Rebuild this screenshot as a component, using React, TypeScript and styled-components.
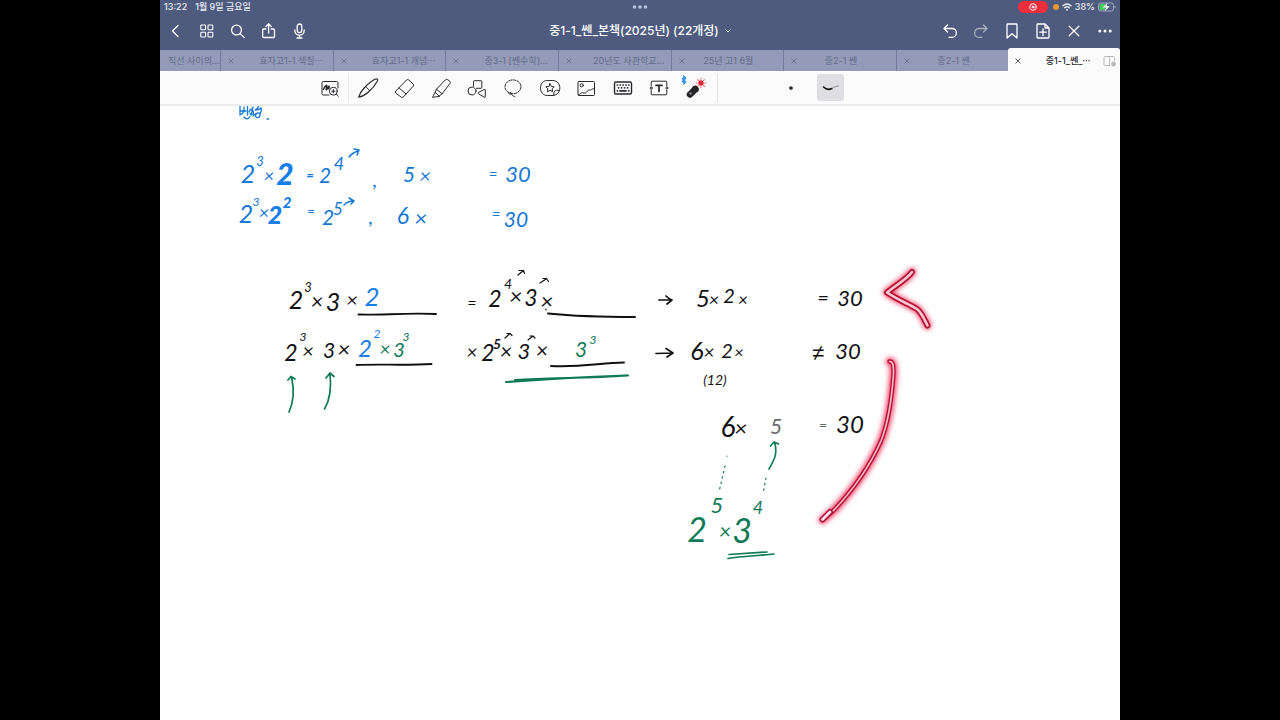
import React from 'react';
import styled, { createGlobalStyle } from 'styled-components';

const GlobalStyle = createGlobalStyle`
  * { box-sizing: border-box; }
  body { margin: 0; background: #000; font-family: Inter, "Noto Sans CJK KR", sans-serif; }
  button { font: inherit; color: inherit; background: none; border: 0; padding: 0; margin: 0; }
  svg { display: block; }
`;

const Screen = styled.div`
  width: 75%;
  min-height: 100vh;
  margin: 0 auto;
  background: #fff;
  overflow: hidden;
  display: flex;
  flex-direction: column;
`;

const Header = styled.header`
  background: #4e5b7e;
  color: #fff;
`;

const StatusBar = styled.div`
  height: 14px;
  padding: 0 4px;
  display: grid;
  grid-template-columns: 1fr auto 1fr;
  align-items: center;
  font-size: 9px;
  line-height: 14px;
  font-weight: 500;
  color: #e9ecf4;
`;

const StatusGroup = styled.div<{ $end?: boolean }>`
  display: flex;
  align-items: center;
  gap: ${(p) => (p.$end ? 3 : 8)}px;
  justify-content: ${(p) => (p.$end ? 'flex-end' : 'flex-start')};
`;

const RecordPill = styled.span`
  width: 30px;
  height: 12px;
  border-radius: 6px;
  background: #ee2f3b;
  display: grid;
  place-items: center;
  margin-right: 2px;
`;

const MicDot = styled.span`
  width: 6px;
  height: 6px;
  border-radius: 50%;
  background: #e39a35;
`;

const NavBar = styled.nav`
  height: 36px;
  padding-bottom: 2px;
  display: grid;
  grid-template-columns: 1fr auto 1fr;
  align-items: center;
`;

const NavGroup = styled.div<{ $end?: boolean }>`
  display: flex;
  justify-content: ${(p) => (p.$end ? 'flex-end' : 'flex-start')};
`;

const NavButton = styled.button<{ $dim?: boolean }>`
  width: 31px;
  height: 32px;
  display: grid;
  place-items: center;
  opacity: ${(p) => (p.$dim ? 0.5 : 1)};
`;

const TitleButton = styled.button`
  display: flex;
  align-items: center;
  gap: 6px;
  font-size: 12px;
  line-height: 20px;
  font-weight: 500;
  white-space: nowrap;
`;

const TabStrip = styled.div`
  height: 21px;
  display: flex;
  background: #949bb9;
`;

const Tab = styled.div<{ $active?: boolean; $clipped?: boolean }>`
  flex: ${(p) => (p.$clipped ? '0 0 60px' : '1 1 0')};
  min-width: 0;
  height: ${(p) => (p.$active ? 23 : 21)}px;
  margin-top: ${(p) => (p.$active ? -2 : 0)}px;
  padding-right: ${(p) => (p.$clipped ? 8 : 0)}px;
  padding-top: ${(p) => (p.$active ? 2 : 0)}px;
  border-left: ${(p) => (p.$clipped || p.$active ? 0 : 1)}px solid #747c9d;
  border-radius: ${(p) => (p.$active ? '3px 3px 0 0' : '0')};
  background: ${(p) => (p.$active ? '#fbfbfc' : 'transparent')};
  color: ${(p) => (p.$active ? '#2b2b30' : '#636a87')};
  display: flex;
  align-items: center;
  font-size: 9px;
  line-height: 20px;
`;

const CloseButton = styled.button`
  width: 20px;
  height: 20px;
  display: grid;
  place-items: center;
  flex: none;
`;

const TabTitle = styled.button<{ $long?: boolean; $strong?: boolean }>`
  flex: 1;
  min-width: 0;
  padding-left: ${(p) => (p.$long ? 8 : 0)}px;
  padding-right: ${(p) => (p.$long ? 0 : 18)}px;
  font-weight: ${(p) => (p.$strong ? 500 : 400)};
  text-align: center;
  white-space: nowrap;
`;

const Toolbar = styled.div`
  height: 35px;
  padding-left: 152px;
  display: flex;
  align-items: center;
  background: #fbfbfc;
  border-bottom: 2px solid #ebebed;
`;

const ToolButton = styled.button<{ $divided?: boolean }>`
  width: 37px;
  height: 30px;
  display: grid;
  place-items: center;
  color: #2a2a2e;
  border-right: ${(p) => (p.$divided ? 1 : 0)}px solid #ececee;
`;

const ToolGroup = styled.div`
  display: flex;
  width: 406px;
  padding-right: 3px;
  border-right: 1px solid #e4e4e7;
  & > button { flex: 1 1 0; }
`;

const StrokeGroup = styled.div`
  display: flex;
  align-items: center;
  gap: 8px;
  padding-left: 54px;
`;

const StrokeStyle = styled.button`
  width: 27px;
  height: 27px;
  border-radius: 3px;
  background: #dfdfe3;
  display: grid;
  place-items: center;
`;

const Page = styled.main`
  flex: 1;
  background: #fff;
  & > svg { width: 100%; height: auto; }
`;

const Handwriting = styled.text<{ $weight?: number; $symbol?: boolean }>`
  font-family: ${(p) => (p.$symbol ? '"Liberation Sans"' : 'Lato, "Liberation Sans"')}, sans-serif;
  font-style: italic;
  font-weight: ${(p) => p.$weight ?? 400};
  text-anchor: middle;
`;

type IconProps = { w?: number; h?: number; sw?: number; children: React.ReactNode };
const Icon = ({ w = 20, h = 20, sw = 1.3, children }: IconProps) => (
  <svg width={w} height={h} viewBox={`0 0 ${w} ${h}`} fill="none" stroke="currentColor"
    strokeWidth={sw} strokeLinecap="round" strokeLinejoin="round" aria-hidden="true">
    {children}
  </svg>
);

const CloseGlyph = () => (
  <Icon w={6} h={6} sw={0.8}><path d="M.8.8l4.4 4.4M5.2.8L.8 5.2" /></Icon>
);

const leftNav = [
  { label: '뒤로', art: <path d="M12 4.5L6.500 10l5.500 5.500" /> },
  { label: '모아보기', art: <g strokeWidth="1.100"><rect x="3.800" y="4" width="4.800" height="4.800" rx=".8" /><rect x="11" y="4" width="4.800" height="4.800" rx=".8" /><rect x="3.800" y="11.200" width="4.800" height="4.800" rx=".8" /><rect x="11" y="11.200" width="4.800" height="4.800" rx=".8" /></g> },
  { label: '검색', art: <><circle cx="8.500" cy="9" r="4.900" /><path d="M12.200 12.600l4 4" /></> },
  { label: '공유', art: <path d="M7 8H4.700Q3.700 8 3.700 9v6.500q0 1 1 1h9.800q1 0 1-1V9q0-1-1-1h-2.300M9.600 12V3M6.800 5.600l2.800-2.800 2.800 2.800" /> },
  { label: '녹음', art: <><rect x="7.200" y="3" width="4.600" height="8.600" rx="2.300" /><path d="M4.800 8.800v.7a4.700 4.700 0 009.400 0v-.7M9.500 14.300V17M7 17h5" /></> },
];

const rightNav = [
  { label: '실행 취소', art: <path d="M7.500 4L4 7.500 7.500 11M4.300 7.500h7.700a4.400 4.400 0 010 8.800H9" /> },
  { label: '다시 실행', dim: true, art: <path d="M12.500 4L16 7.500 12.500 11M15.700 7.500H8a4.400 4.400 0 000 8.800h3" /> },
  { label: '책갈피', art: <path d="M5 3.800q0-.8.8-.8h8.400q.8 0 .8.800V17l-5-4.300L5 17z" /> },
  { label: '페이지 추가', art: <path d="M5 3h7l4 4v9.200q0 .8-.8.8H4.800q-.8 0-.8-.8V3.800Q4 3 4.800 3M12 3v4h4M10 8v6.500M6.800 11.200h6.500" /> },
  { label: '편집 닫기', art: <path d="M5.200 5.200l9.600 9.600M14.800 5.200l-9.600 9.600" /> },
  { label: '더보기', art: <g fill="currentColor" stroke="none"><circle cx="4.800" cy="10" r="1.500" /><circle cx="10" cy="10" r="1.500" /><circle cx="15.200" cy="10" r="1.500" /></g> },
];

const tabs = [
  { title: '효자고1-1 색칠···', long: true },
  { title: '효자고1-1 개념···', long: true },
  { title: '중3-1 [쎈수학]...', long: true },
  { title: '20년도 사관학교...', long: true },
  { title: '25년 고1 6월' },
  { title: '중2-1 쎈' },
  { title: '중2-1 쎈' },
];

const tools = [
  { label: '확대 창', divided: true, art: <><path d="M10 18H4.300Q3 18 3 16.700V5.800Q3 4.500 4.300 4.500h13.400Q19 4.500 19 5.800V11" /><path d="M4.300 12.500c1-2 2.600-4.700 3.400-4.200s-1.200 4.200-.4 4.500 1.900-3.900 2.700-3.600-.5 1.800-.2 2.600" strokeWidth="1.500" /><circle cx="14.300" cy="14.200" r="3.900" /><path d="M17.200 17l2.200 2.300M12.700 14.200h3.200M14.300 12.600v3.200" /></> },
  { label: '펜', art: <><path d="M1.700 20.200c.8-3.300 2.500-6 5-8.700C10.300 7.600 14.500 4 18 2.300c2.200-.9 3.300 0 2.300 2C18.500 7.700 15 12 11.200 15.300c-2.700 2.300-5.500 4.300-9.500 4.900z" strokeWidth="1.200" /><path d="M8.800 9.600l3.600 3.900" /></> },
  { label: '지우개', art: <path d="M2.600 14.300L13.500 3q1.100-1.100 2.200-.1l4.500 4.200q1.100 1 0 2.100L10.300 20q-1 1-2.100.1l-5.500-4.100q-.9-.8-.1-1.700zM5.900 10.800l7.200 6.200" /> },
  { label: '형광펜', art: <path d="M2.700 20l2.300-4.600 4.200 3.700zM5 15.400l1.500-3.200 5.600 4.600-2.900 2.300M6.500 12.200L15.600 2.600q1-.9 2 0l2.200 1.700q1.100.9.300 2L12.100 16.800" /> },
  { label: '도형', art: <><path d="M7.500 9V4.500q0-.8.8-.8H15q.8 0 .8.800v6q0 .8-.8.8h-4.500" /><circle cx="6" cy="14" r="4" /><path d="M12.300 15.700q-.6.500 0 1l6.200 3.600q.8.400.8-.4v-7.200q0-.8-.8-.4z" /></> },
  { label: '올가미', art: <><ellipse cx="11" cy="9.800" rx="8" ry="6.900" strokeDasharray="2.600 1.300" /><path d="M6.800 15.200c-.6 1.200.5 2.200 1.800 1.900s1.200-1.500 0-1.700M9.300 16.500c.3 1.500 1.400 2.700 3.200 3" /></> },
  { label: '스티커', art: <><path d="M13.800 18.500H8.200C4 18.500 1.500 15 1.500 11S4 3.500 8.200 3.500h5.600c4.200 0 7 3.500 7 7.200 0 4.500-2.500 7.500-7 7.800zM14.800 18c-.6-3.200 1.200-5.600 5.500-4.600" /><path d="M11 6.700l1.300 2.700 2.900.4-2.100 2 .5 2.900-2.600-1.400-2.600 1.400.5-2.900-2.100-2 2.900-.4z" /></> },
  { label: '이미지', art: <><rect x="3" y="4.500" width="16.500" height="14" rx="1" /><circle cx="6.700" cy="8.300" r="1.600" /><path d="M3.300 18c2.300-.8 2.700-2.700 4.500-2.300s2.500.6 3.600-.4 1.600-2.700 3.200-2.300 2-1.300 4.600-1.400" /></> },
  { label: '키보드', art: <><rect x="2.500" y="5" width="17" height="12" rx="1.500" strokeWidth="1.400" /><path d="M5.300 8h.2M8.200 8h.2M11 8h.2M13.900 8h.2M16.600 8h.2M6.500 10.800h.2M9.500 10.800h.2M12.500 10.800h.2M15.500 10.800h.2M5.300 13.800h.2M8 13.800h6M16.600 13.800h.2" strokeWidth="1.700" /></> },
  { label: '텍스트', art: <><path d="M3.200 9V5q0-.8.8-.8h14q.8 0 .8.800v4M18.800 13v4q0 .8-.8.800H4q-.8 0-.8-.8v-4" /><circle cx="3.200" cy="11" r="1" /><circle cx="18.800" cy="11" r="1" /><path d="M8 8.400h6M11 8.400v6" strokeWidth="1.700" /></> },
];

const LaserIcon = () => (
  <svg width="30" height="26" viewBox="0 0 30 26" fill="none" aria-hidden="true">
    <path d="M.8 3l4 4-2 2V1l2 2-4 4" stroke="#1687e8" strokeWidth="1.100" />
    <path d="M9 19.500l5.500-5.500" stroke="#242426" strokeWidth="6.500" strokeLinecap="round" />
    <path d="M12 11.500l5 5" stroke="#242426" strokeWidth="2.500" />
    <circle cx="9.500" cy="18.500" r="1.200" fill="#8b8b90" />
    <g stroke="#e0606a" strokeWidth="1.100" strokeLinecap="round">
      <path d="M20 3.200v.9M20 11.900v.9M15.200 8h.9M23.900 8h.9M16.600 4.600l.7.7M22.700 10.700l.7.7M23.400 4.600l-.7.7M17.300 10.700l-.7.7" />
    </g>
    <circle cx="20" cy="8" r="2.700" fill="#df2638" />
  </svg>
);

const BLUE = '#1478d4';
const SKY = '#177de8';
const BLACK = '#111114';
const GREEN = '#0f7a57';

// [text, centre x, baseline y, size, weight]
type Mark = [string, number, number, number, number?];

const inkGroups: { color: string; marks: Mark[] }[] = [
  { color: BLUE, marks: [
    ['2', 248, 183, 25], ['3', 260, 166, 13], ['×', 269, 182, 18], ['=', 310, 180, 13, 700], ['2', 325, 183, 21],
    ['4', 339, 170, 18], [',', 375, 187, 20], ['5', 409, 182, 21], ['×', 425, 183, 20], ['=', 493, 180, 15],
    ['30', 518, 182, 22],
    ['2', 246, 223, 25], ['3', 256, 206, 12], ['×', 264, 219, 18], ['=', 311, 216, 13], ['2', 328, 225, 21],
    ['5', 338, 215, 17], [',', 371, 224, 20], ['6', 403, 224, 23], ['×', 421, 226, 22], ['=', 496, 220, 15],
    ['30', 516, 227, 21],
  ] },
  { color: SKY, marks: [
    ['2', 285, 185, 30, 900], ['2', 275, 224, 25, 900], ['2', 287, 208, 15, 900],
    ['2', 372, 306, 26], ['2', 365, 357, 24], ['2', 377, 338, 12],
  ] },
  { color: BLACK, marks: [
    ['2', 296, 309, 25], ['3', 308, 292, 13], ['×', 317, 309, 21], ['3', 333, 311, 25], ['×', 352, 307, 20],
    ['=', 472, 309, 16], ['2', 495, 307, 23], ['4', 508, 289, 14], ['×', 516, 304, 22], ['3', 531, 306, 23], ['×', 547, 309, 22],
    ['5', 703, 307, 24], ['×', 714, 306, 18], ['2', 729, 303, 20], ['×', 743, 306, 17], ['=', 823, 305, 20],
    ['30', 850, 306, 22],
    ['2', 291, 361, 23], ['3', 303, 341, 12], ['×', 308, 358, 20], ['3', 329, 358, 21], ['×', 344, 357, 22],
    ['×', 472, 359, 19], ['2', 488, 361, 23], ['5', 497, 349, 14, 700], ['×', 506, 359, 21], ['3', 524, 359, 22], ['×', 542, 358, 21],
    ['6', 697, 360, 25], ['×', 709, 359, 19], ['2', 727, 358, 20], ['×', 739, 358, 16], ['≠', 818, 360, 22],
    ['30', 848, 359, 22], ['(12)', 715, 385, 14],
    ['6', 728, 437, 28], ['×', 741, 436, 22], ['30', 850, 433, 24],
  ] },
  { color: '#68686b', marks: [['5', 776, 434, 21], ['=', 823, 430, 14]] },
  { color: GREEN, marks: [
    ['×', 385, 356, 19], ['3', 399, 357, 20], ['3', 406, 341, 12], ['3', 581, 357, 21], ['3', 593, 344, 12],
    ['5', 717, 513, 22], ['4', 758, 514, 18], ['2', 697, 542, 34], ['×', 725, 539, 21], ['3', 742, 543, 34],
  ] },
];

const laserStrokes = [
  'M912 272C906 280 896 285 887 292.500C898 300 909 304 917 309C922 313 924 319 927.500 325.500',
  'M889.500 361.500C894 361 893.500 369 893.500 374C892 395 889 421 881 441C869 468 851 492 834 510L822.500 520',
];

const InkPage = () => (
  <svg viewBox="160 106 960 614" fill="none" strokeLinecap="round" strokeLinejoin="round" role="img" aria-label="필기">
    <defs>
      <filter id="glow" x="-50%" y="-50%" width="200%" height="200%"><feGaussianBlur stdDeviation="2.500" /></filter>
    </defs>
    <g stroke={BLUE} strokeWidth="1.300">
      <path d="M240 106v9q3-1 4-4v-4M241 111h5M247.500 105v10M244 117q3 4 6-.5M249 112q2-5 4-1t-3 3M253 107l-2 8M253 116c4-4 8-4 7-.5s-6 2-4-1M259 105q-1 4-4 5 4 0 6-2 1 3-1 6M267 119h1.500" />
      <path d="M349 157q3-4 9-6M354 149l5 1-2 5M344 205q4-4 9-4M349 198l5 3-3 3" strokeWidth="1.500" />
    </g>
    <g stroke={BLACK} strokeWidth="1.900">
      <path d="M358.500 314.500C380 315.500 405 312.500 436 314" />
      <path d="M356.500 365C376 364 409 365.500 431.500 364" />
      <path d="M548 313.500C568 315.500 602 317 635 317" />
      <path d="M551 366C581 367.500 600 363 624 362.500" />
    </g>
    <g stroke={BLACK} strokeWidth="1.200">
      <path d="M518 275l5.500-4.500M519 270.500l4.500 0 1 3M540 283l6-4M543 278.500l3.500 0 2 3M505 338l5-4.500M507 333.500h3l2 2M528 340l5-4M530 336h3l2 2M546 309v1" />
    </g>
    <g stroke={BLACK} strokeWidth="1.700">
      <path d="M659 300h12M666 296q3 3 6 4l-5 4M656 353.500l16-.5M666 348.500l7 4.500-6 4" />
    </g>
    <g stroke={GREEN} strokeWidth="1.700">
      <path d="M289 412C295 399 294 388 291.500 377M288 380l3-3.500 4 2.500M324.500 409C330 400 331.500 388 330 373.500M326 378l4-5 4 3.500" />
      <path d="M769 469C774 460 778 454 774.500 442M770.500 446l3.500-4 4.500 2" />
      <path d="M506 382C536 380 570 377.500 627 375.500M515 380C555 378 592 378 628 375.500" strokeWidth="2.200" />
      <path d="M729 554.500L767 552M728 558.500C742 556 756 556 774 554" />
      <path d="M727 456v.2M725 466L719 492M766 478l-3 16" strokeWidth="1.200" strokeDasharray="1.500 4" />
    </g>
    {inkGroups.map((group) => (
      <g key={group.color} fill={group.color}>
        {group.marks.map(([text, x, y, size, weight]) => (
          <Handwriting key={`${x}-${y}`} x={x} y={y} fontSize={size} $weight={weight} $symbol={text === '≠'}>{text}</Handwriting>
        ))}
      </g>
    ))}
    {laserStrokes.map((d) => <path key={d} d={d} stroke="#f0486c" strokeWidth="8" filter="url(#glow)" />)}
    <path d={laserStrokes[0]} stroke="#b80f35" strokeWidth="6" />
    <path d={laserStrokes[0]} stroke="#f6c9d2" strokeWidth="2.600" />
    <path d={laserStrokes[1]} stroke="#b80f35" strokeWidth="4.400" />
    <path d={laserStrokes[1]} stroke="#f3b8c5" strokeWidth="1.700" />
    <path d="M822.500 519.500l7.500-7.500" stroke="#b0103a" strokeWidth="6" />
    <path d="M822.500 519.500l7.500-7.500" stroke="#fce9ed" strokeWidth="2.800" />
  </svg>
);

export default function App() {
  return (
    <>
      <GlobalStyle />
      <Screen>
        <Header>
          <StatusBar>
            <StatusGroup><span>13:22</span><span>1월 9일 금요일</span></StatusGroup>
            <svg width="16" height="4" viewBox="0 0 16 4" fill="#b9c3df" aria-hidden="true"><circle cx="2.500" cy="2" r="1.800" /><circle cx="8" cy="2" r="1.800" /><circle cx="13.500" cy="2" r="1.800" /></svg>
            <StatusGroup $end>
              <RecordPill><Icon w={8} h={8} sw={1}><circle cx="4" cy="4" r="3.300" /><circle cx="4" cy="4" r="1" fill="currentColor" /></Icon></RecordPill>
              <MicDot />
              <Icon w={10} h={8} sw={1.4}><path d="M1 2.700q4-3.400 8 0M2.600 4.700q2.400-2 4.800 0" /><path d="M5 6.700v.1" strokeWidth="1.800" /></Icon>
              <span>38%</span>
              <svg width="18" height="10" viewBox="0 0 18 10" fill="none" aria-hidden="true">
                <rect x=".5" y="1" width="15" height="8" rx="2.300" stroke="#a0a9c2" />
                <path d="M3 2h4v6H3q-1.500 0-1.500-1.500v-3Q1.500 2 3 2z" fill="#40cf5c" />
                <path d="M9.500.8L4.700 5.500H8L6.800 9.300l5-5H8.500z" fill="#fff" />
                <path d="M17 4v2" stroke="#a0a9c2" />
              </svg>
            </StatusGroup>
          </StatusBar>
          <NavBar>
            <NavGroup>
              {leftNav.map((n) => <NavButton key={n.label} aria-label={n.label}><Icon>{n.art}</Icon></NavButton>)}
            </NavGroup>
            <TitleButton>
              중1-1_쎈_본책(2025년) (22개정)
              <Icon w={6} h={4} sw={1}><path d="M.8.8L3 3l2.200-2.200" /></Icon>
            </TitleButton>
            <NavGroup $end>
              {rightNav.map((n) => <NavButton key={n.label} aria-label={n.label} $dim={n.dim}><Icon>{n.art}</Icon></NavButton>)}
            </NavGroup>
          </NavBar>
          <TabStrip>
            <Tab $clipped><TabTitle $long>직선 사이의...</TabTitle></Tab>
            {tabs.map((t, i) => (
              <Tab key={i}>
                <CloseButton aria-label="탭 닫기"><CloseGlyph /></CloseButton>
                <TabTitle $long={t.long}>{t.title}</TabTitle>
              </Tab>
            ))}
            <Tab $active>
              <CloseButton aria-label="탭 닫기"><CloseGlyph /></CloseButton>
              <TabTitle $long $strong>중1-1_쎈_···</TabTitle>
              <CloseButton aria-label="분할 보기">
                <svg width="14" height="12" viewBox="0 0 14 12" fill="none" stroke="#b9b9be" aria-hidden="true">
                  <path d="M7 10.500H2q-1 0-1-1v-7q0-1 1-1h8.500q1 0 1 1V6M6.500 1.500v9" /><circle cx="10.500" cy="9" r="2" fill="#b9b9be" />
                </svg>
              </CloseButton>
            </Tab>
          </TabStrip>
        </Header>
        <Toolbar>
          <ToolGroup>
            {tools.map((t) => <ToolButton key={t.label} aria-label={t.label} $divided={t.divided}><Icon w={22} h={22} sw={1}>{t.art}</Icon></ToolButton>)}
            <ToolButton aria-label="레이저 포인터"><LaserIcon /></ToolButton>
          </ToolGroup>
          <StrokeGroup>
            <ToolButton aria-label="굵기"><Icon w={6} h={6}><circle cx="3" cy="3" r="1.200" fill="currentColor" /></Icon></ToolButton>
            <StrokeStyle aria-label="획 스타일">
              <svg width="18" height="8" viewBox="0 0 18 8" fill="none" strokeLinecap="round" aria-hidden="true">
                <path d="M1.500 3C4 5.500 7 6 10 4.500" stroke="#111" strokeWidth="1.600" /><path d="M10 4.500c2-1.500 4-2.500 6.500-2.500" stroke="#88888c" />
              </svg>
            </StrokeStyle>
          </StrokeGroup>
        </Toolbar>
        <Page><InkPage /></Page>
      </Screen>
    </>
  );
}
